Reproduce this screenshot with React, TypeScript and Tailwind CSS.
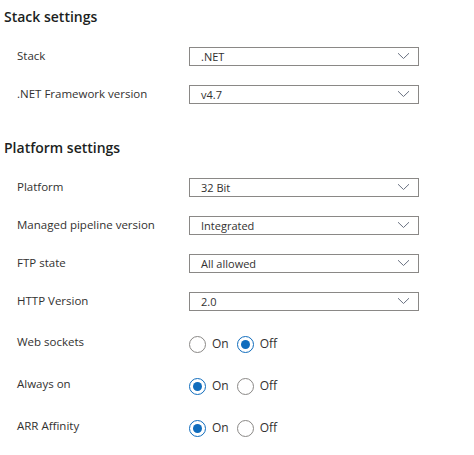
import React from "react"

const font = { fontFamily: '"Open Sans", "Noto Sans", sans-serif' }

function Chevron() {
  return (
    <svg width="13" height="8" viewBox="0 0 13 8" className="text-gray-500">
      <path d="M1 1.2 L6.5 6.5 L12 1.2" fill="none" stroke="currentColor" strokeWidth="1" />
    </svg>
  )
}

function Select(props: { value: string }) {
  return (
    <div className="flex h-[19px] w-[230px] shrink-0 items-center justify-between border border-[#8a8886] bg-white pl-[11px] pr-[8px]">
      <span className="text-[11px] leading-none text-[#323130]">{props.value}</span>
      <Chevron />
    </div>
  )
}

function Radio(props: { checked: boolean; label: string }) {
  const { checked, label } = props
  return (
    <div className="flex items-center">
      <div
        className={
          checked
            ? "flex h-[17px] w-[17px] items-center justify-center rounded-full border border-[#0f6cbd]"
            : "flex h-[17px] w-[17px] items-center justify-center rounded-full border border-[#8a8886]"
        }
      >
        {checked && <div className="h-[9px] w-[9px] rounded-full bg-[#0f6cbd]" />}
      </div>
      <span className="ml-[6px] text-[12px] text-[#323130]">{label}</span>
    </div>
  )
}

function SelectRow(props: { label: string; value: string }) {
  return (
    <div className="flex h-[38px] items-center">
      <div className="w-[189px] shrink-0 pl-[17px] text-[11.5px] text-[#323130]">{props.label}</div>
      <Select value={props.value} />
    </div>
  )
}

function RadioRow(props: { label: string; on: boolean }) {
  return (
    <div className="flex h-[42px] items-center">
      <div className="mb-[5px] w-[189px] shrink-0 pl-[17px] text-[11.5px] text-[#323130]">{props.label}</div>
      <div className="flex gap-[8px]">
        <Radio checked={props.on} label="On" />
        <Radio checked={!props.on} label="Off" />
      </div>
    </div>
  )
}

export default function App() {
  return (
    <div className="h-[455px] w-[474px] bg-white pt-[7px]" style={font}>
      <div className="h-5 pl-[4px] text-[14px] font-semibold leading-5 text-[#201f1e]">Stack settings</div>
      <div className="mt-[10px]">
        <SelectRow label="Stack" value=".NET" />
        <SelectRow label=".NET Framework version" value="v4.7" />
      </div>
      <div className="mt-[25px] h-5 pl-[4px] text-[14px] font-semibold leading-5 text-[#201f1e]">Platform settings</div>
      <div className="mt-[10px]">
        <SelectRow label="Platform" value="32 Bit" />
        <SelectRow label="Managed pipeline version" value="Integrated" />
        <SelectRow label="FTP state" value="All allowed" />
        <SelectRow label="HTTP Version" value="2.0" />
      </div>
      <div className="mt-[3px]">
        <RadioRow label="Web sockets" on={false} />
        <RadioRow label="Always on" on={true} />
        <RadioRow label="ARR Affinity" on={true} />
      </div>
    </div>
  )
}
